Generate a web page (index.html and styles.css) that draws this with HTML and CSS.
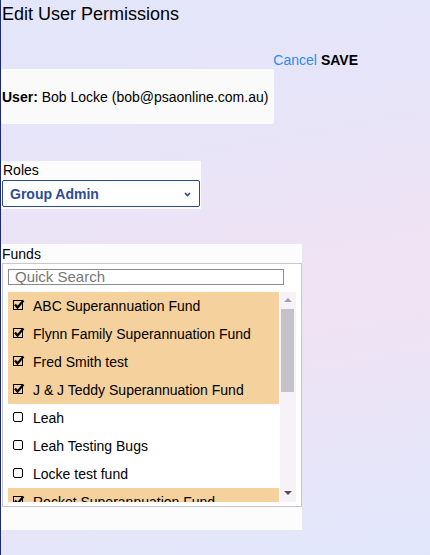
FILE: index.html
```html
<!DOCTYPE html>
<html>
<head>
<meta charset="utf-8">
<link rel="stylesheet" href="styles.css">
</head>
<body>
<div class="page">
  <h1 class="title">Edit User Permissions</h1>
  <div class="actions">
    <span class="cancel">Cancel</span>
    <span class="save">SAVE</span>
  </div>
  <div class="user-box"><b>User:</b> Bob Locke (bob@psaonline.com.au)</div>

  <div class="panel roles">
    <div class="label">Roles</div>
    <div class="select">
      <span>Group Admin</span>
      <svg class="chev" width="7" height="5" viewBox="0 0 7 5"><polyline points="1,1 3.5,3.5 6,1" fill="none" stroke="#2e4c96" stroke-width="1.6"/></svg>
    </div>
  </div>

  <div class="panel funds">
    <div class="label">Funds</div>
    <div class="funds-box">
      <div class="search">Quick Search</div>
      <div class="list-wrap">
        <div class="list">
          <div class="item on"><svg class="cb" width="12" height="12" viewBox="0 0 12 12"><rect x="0.5" y="1.5" width="9" height="9" fill="none" stroke="#000"/><path d="M2 5.5 L4.5 8.5 L10.5 1.5" fill="none" stroke="#000" stroke-width="2.2"/></svg><span>ABC Superannuation Fund</span></div>
          <div class="item on"><svg class="cb" width="12" height="12" viewBox="0 0 12 12"><rect x="0.5" y="1.5" width="9" height="9" fill="none" stroke="#000"/><path d="M2 5.5 L4.5 8.5 L10.5 1.5" fill="none" stroke="#000" stroke-width="2.2"/></svg><span>Flynn Family Superannuation Fund</span></div>
          <div class="item on"><svg class="cb" width="12" height="12" viewBox="0 0 12 12"><rect x="0.5" y="1.5" width="9" height="9" fill="none" stroke="#000"/><path d="M2 5.5 L4.5 8.5 L10.5 1.5" fill="none" stroke="#000" stroke-width="2.2"/></svg><span>Fred Smith test</span></div>
          <div class="item on"><svg class="cb" width="12" height="12" viewBox="0 0 12 12"><rect x="0.5" y="1.5" width="9" height="9" fill="none" stroke="#000"/><path d="M2 5.5 L4.5 8.5 L10.5 1.5" fill="none" stroke="#000" stroke-width="2.2"/></svg><span>J &amp; J Teddy Superannuation Fund</span></div>
          <div class="item"><svg class="cb" width="12" height="12" viewBox="0 0 12 12"><rect x="0.5" y="1.5" width="9" height="9" rx="1.5" fill="#fff" stroke="#000"/></svg><span>Leah</span></div>
          <div class="item"><svg class="cb" width="12" height="12" viewBox="0 0 12 12"><rect x="0.5" y="1.5" width="9" height="9" rx="1.5" fill="#fff" stroke="#000"/></svg><span>Leah Testing Bugs</span></div>
          <div class="item"><svg class="cb" width="12" height="12" viewBox="0 0 12 12"><rect x="0.5" y="1.5" width="9" height="9" rx="1.5" fill="#fff" stroke="#000"/></svg><span>Locke test fund</span></div>
          <div class="item on"><svg class="cb" width="12" height="12" viewBox="0 0 12 12"><rect x="0.5" y="1.5" width="9" height="9" fill="none" stroke="#000"/><path d="M2 5.5 L4.5 8.5 L10.5 1.5" fill="none" stroke="#000" stroke-width="2.2"/></svg><span>Rocket Superannuation Fund</span></div>
        </div>
        <div class="scrollbar">
          <svg class="arrow" width="16" height="12" viewBox="0 0 16 12"><polygon points="4,8 8,4 12,8" fill="#a0a0a8"/></svg>
          <div class="thumb"></div>
          <div class="track-rest"></div>
          <svg class="arrow" width="16" height="12" viewBox="0 0 16 12"><polygon points="4,4 12,4 8,8" fill="#505058"/></svg>
        </div>
      </div>
    </div>
  </div>
</div>
</body>
</html>
```

FILE: styles.css
```css
html, body {
  margin: 0;
  padding: 0;
  height: 100%;
}
body {
  background: linear-gradient(170deg, #e3e6fa 0%, #e8e4f8 30%, #f1e3f3 55%, #eae4f7 75%, #e1e7fb 100%);
  font-family: "Liberation Sans", Arial, sans-serif;
  font-size: 14px;
  color: #000;
  border-left: 1px solid #1e2a6e;
  box-sizing: border-box;
  min-height: 555px;
}
.page {
  display: flex;
  flex-direction: column;
  align-items: flex-start;
}
.title {
  margin: 4px 0 0 1px;
  font-size: 18px;
  font-weight: normal;
  line-height: 21px;
}
.actions {
  margin-top: 27px;
  width: 357px;
  display: flex;
  justify-content: flex-end;
  gap: 4px;
  line-height: 16px;
}
.cancel {
  color: #2a8cf0;
}
.save {
  font-weight: bold;
}
.user-box {
  margin-top: 1px;
  background: #fafafa;
  border-radius: 2px;
  padding: 20px 1px 19px 1px;
  width: 271px;
  line-height: 16px;
  white-space: nowrap;
}
.panel {
  background: #fcfcfd;
  box-sizing: border-box;
}
.label {
  line-height: 16px;
  padding-left: 1px;
}
.roles {
  margin-top: 37px;
  width: 200px;
  padding: 1px 0 2px 1px;
}
.select {
  margin-top: 2px;
  box-sizing: border-box;
  width: 198px;
  height: 27px;
  border: 1px solid #2e4a8a;
  border-radius: 2px;
  display: flex;
  align-items: center;
  justify-content: space-between;
  padding: 1px 8px 0 7px;
  font-weight: bold;
  color: #2e4c96;
  background: #fff;
}
.chev {
  display: block;
  margin-top: 0;
}
.funds {
  margin-top: 35px;
  width: 302px;
  padding: 2px 0 23px 0;
  border-right: 1px solid #e6e6ec;
  border-bottom: 1px solid #e6e6ec;
}
.funds-box {
  margin: 1px 0 0 1px;
  border: 1px solid #c8c8cc;
  padding: 5px 0 4px 5px;
  background: #fff;
}
.search {
  box-sizing: border-box;
  width: 276px;
  height: 16px;
  border: 1px solid #8a8a90;
  color: #777;
  font-size: 15px;
  line-height: 14px;
  padding-left: 6px;
  background: #fff;
}
.list-wrap {
  margin-top: 7px;
  display: flex;
  gap: 1px;
  height: 210px;
}
.list {
  width: 271px;
  height: 210px;
  overflow: hidden;
  background: #fff;
}
.item {
  height: 28px;
  display: flex;
  align-items: center;
  gap: 8px;
  padding-left: 5px;
  white-space: nowrap;
}
.item span {
  padding-top: 0;
}
.item.on {
  background: #f4d19d;
}
.cb {
  display: block;
  flex: none;
  margin-bottom: 2px;
}
.scrollbar {
  width: 16px;
  background: #f6f2f8;
  display: flex;
  flex-direction: column;
}
.arrow {
  display: block;
  flex: none;
  margin-top: 2px;
}
.thumb {
  margin: 3px 2px 0 1px;
  height: 83px;
  background: #c2c2c8;
  flex: none;
}
.track-rest {
  flex: 1;
}
.scrollbar .arrow:last-child {
  margin: 0 0 3px 0;
}
```
